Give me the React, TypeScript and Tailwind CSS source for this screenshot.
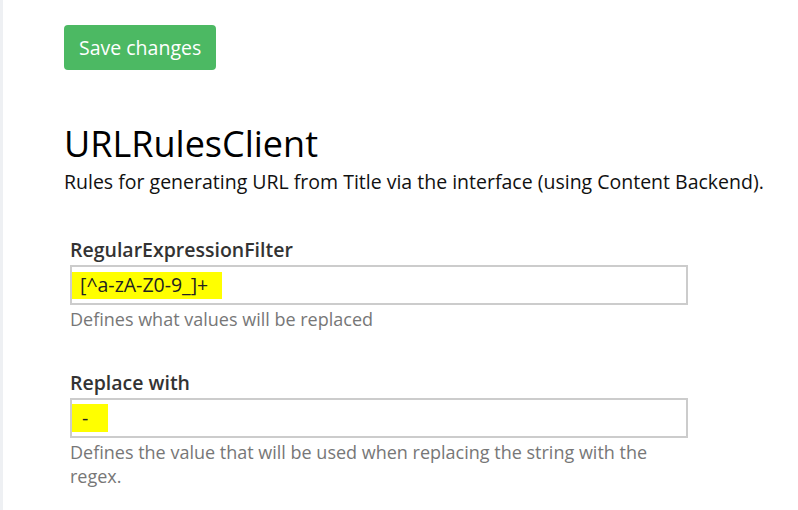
import React from "react";

export default function App() {
  const font = { fontFamily: '"Open Sans", "Liberation Sans", sans-serif' };
  return (
    <div className="flex w-[798px] h-[510px] bg-white overflow-hidden" style={font}>
      <div className="w-[3px] h-full bg-[#eef0f3]" />
      <div className="flex flex-col pl-[61px] pt-[25px]">
        <div>
          <button className="h-[45px] px-[15px] rounded-[4px] bg-[#4cb963] text-white text-[19.5px] leading-[45px]">
            Save changes
          </button>
        </div>
        <h1 className="mt-[52px] text-[36px] leading-[44px] text-black font-normal">URLRulesClient</h1>
        <p className="mt-[2px] text-[19.5px] leading-[28px] text-[#111]">
          Rules for generating URL from Title via the interface (using Content Backend).
        </p>
        <div className="mt-[41px] pl-[6px] flex flex-col">
          <label className="text-[19.5px] leading-[26px] font-semibold text-[#333]">RegularExpressionFilter</label>
          <div className="mt-[2px] w-[618px] h-[40px] border-2 border-[#cccccc] flex items-center px-[0px]">
            <span className="bg-[#ffff00] h-[27px] w-[150px] flex items-center pl-[8px] text-[19.5px] text-[#222]">[^a-zA-Z0-9_]+</span>
          </div>
          <p className="mt-[2px] text-[18px] leading-[24px] text-[#777]">Defines what values will be replaced</p>
          <label className="mt-[39px] text-[19.5px] leading-[26px] font-semibold text-[#333]">Replace with</label>
          <div className="mt-[2px] w-[618px] h-[40px] border-2 border-[#cccccc] flex items-center px-[0px]">
            <span className="bg-[#ffff00] h-[28px] w-[36px] flex items-center pl-[10px] text-[19.5px] text-[#222]">-</span>
          </div>
          <p className="mt-[2px] w-[618px] text-[18px] leading-[24px] text-[#777]">
            Defines the value that will be used when replacing the string with the regex.
          </p>
        </div>
      </div>
    </div>
  );
}
